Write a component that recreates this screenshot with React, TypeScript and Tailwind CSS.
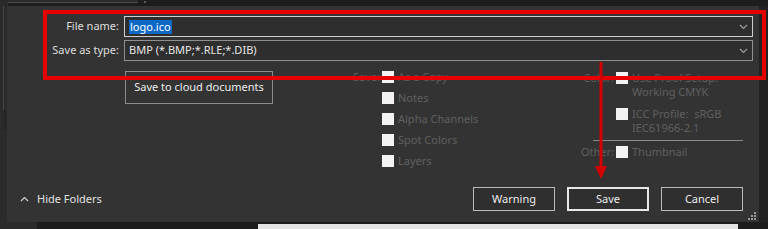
import React from "react";

const font = { fontFamily: '"Noto Sans", "Open Sans", sans-serif' };

function Chevron({ up = false }: { up?: boolean }): React.ReactElement {
  return (
    <svg width="9" height="6" viewBox="0 0 9 6" fill="none">
      <path
        d={up ? "M1 5L4.5 1.5L8 5" : "M1 1L4.5 4.5L8 1"}
        stroke="currentColor"
        strokeWidth="1.2"
      />
    </svg>
  );
}

function Box(): React.ReactElement {
  return <span className="block w-[12px] h-[12px] shrink-0 bg-[#f3f3f3]" />;
}

function CheckRow({ label }: { label: string }): React.ReactElement {
  return (
    <div className="flex items-center h-[12px] gap-[4px]">
      <Box />
      <span className="leading-[14px] text-[#606060]">{label}</span>
    </div>
  );
}

function DialogButton({
  label,
  primary,
}: {
  label: string;
  primary?: boolean;
}): React.ReactElement {
  return (
    <button
      type="button"
      className={`w-[82px] h-[24px] flex items-center justify-center bg-[#2f2f2f] text-[#ececec] ${
        primary ? "border-2 border-[#e8e8e8]" : "border border-[#b9b9b9]"
      }`}
    >
      {label}
    </button>
  );
}

export default function App(): React.ReactElement {
  return (
    <div
      className="w-[768px] h-[229px] bg-[#1d1d1d] flex flex-col overflow-hidden relative text-[11px]"
      style={font}
    >
      {/* strip above the dialog */}
      <div className="h-[6px] shrink-0 flex">
        <div className="w-[8px] bg-[#2a2a2a]" />
        <div className="w-[130px] h-[3px] bg-[#2c2c2c] border-b border-[#4a4a4a]" />
        <div className="w-[6px]" />
        <div className="w-[2px] h-[2px] mt-[1px] bg-[#5a5a5a]" />
      </div>

      <div className="flex flex-1 min-h-0">
        {/* left rail */}
        <div className="w-[7px] bg-[#2b2b2b] flex flex-col items-start pl-[3px]">
          <div className="w-[1px] h-[104px] bg-[#444444]" />
          <div className="w-[4px] h-[20px] bg-[#262626]" />
        </div>

        {/* dialog */}
        <div className="w-[752px] bg-[#333333] flex flex-col relative">
          <div className="flex flex-col gap-[3px] pt-[10px]">
            <div className="flex items-center">
              <span className="w-[117px] pr-[5px] text-right text-[#dedede]">File name:</span>
              <div className="flex-1 mr-[6px] h-[21px] border border-[#cfcfcf] bg-[#2e2e2e] flex items-center pl-[4px] pr-[4px]">
                <span className="bg-[#0e68c6] text-white leading-[14px] px-[1px]">logo.ico</span>
                <span className="ml-auto text-[#9a9a9a]">
                  <Chevron />
                </span>
              </div>
            </div>
            <div className="flex items-center">
              <span className="w-[117px] pr-[5px] text-right text-[#dedede]">Save as type:</span>
              <div className="flex-1 mr-[6px] h-[21px] border border-[#8f8f8f] bg-[#2e2e2e] flex items-center pl-[4px] pr-[4px] text-[#e6e6e6]">
                <span>BMP (*.BMP;*.RLE;*.DIB)</span>
                <span className="ml-auto text-[#9a9a9a]">
                  <Chevron />
                </span>
              </div>
            </div>
          </div>

          {/* options */}
          <div className="flex mt-[10px]">
            <div className="w-[118px]" />
            <button
              type="button"
              className="w-[148px] h-[33px] border border-[#8c8c8c] text-[#ececec] flex items-center justify-center"
            >
              Save to cloud documents
            </button>

            <div className="ml-[77px] w-[230px] flex">
              <span className="w-[30px] text-right leading-[12px] text-[#606060]">Save:</span>
              <div className="ml-[2px] flex flex-col gap-[9px]">
                <CheckRow label="As a Copy" />
                <CheckRow label="Notes" />
                <CheckRow label="Alpha Channels" />
                <CheckRow label="Spot Colors" />
                <CheckRow label="Layers" />
              </div>
            </div>

            <div className="flex flex-col text-[#606060]">
              <div className="flex items-start">
                <span className="w-[34px] text-right leading-[14px]">Color:</span>
                <span className="ml-[2px] mt-[1px]">
                  <Box />
                </span>
                <span className="ml-[4px] leading-[14px]">
                  Use Proof Setup:
                  <br />
                  Working CMYK
                </span>
              </div>
              <div className="flex items-start mt-[8px]">
                <span className="w-[34px]" />
                <span className="ml-[2px] mt-[1px]">
                  <Box />
                </span>
                <span className="ml-[4px] leading-[14px] whitespace-pre">
                  {"ICC Profile:  sRGB\nIEC61966-2.1"}
                </span>
              </div>
              <div className="ml-[13px] mt-[5px] w-[150px] h-px bg-[#8a8a8a]" />
              <div className="flex items-center h-[12px] mt-[5px]">
                <span className="w-[34px] text-right">Other:</span>
                <span className="ml-[2px]">
                  <Box />
                </span>
                <span className="ml-[4px]">Thumbnail</span>
              </div>
            </div>
          </div>

          {/* bottom bar */}
          <div className="mt-auto flex items-center pb-[11px] pl-[13px] pr-[16px]">
            <span className="text-[#cfcfcf] flex items-center gap-[8px]">
              <Chevron up />
              <span className="text-[#e0e0e0]">Hide Folders</span>
            </span>
            <div className="ml-auto flex gap-[12px]">
              <DialogButton label="Warning" />
              <DialogButton label="Save" primary />
              <DialogButton label="Cancel" />
            </div>
          </div>

          {/* resize grip */}
          <div className="absolute right-[3px] bottom-[2px] grid grid-cols-3 gap-[1px]">
            <span className="w-[2px] h-[2px]" />
            <span className="w-[2px] h-[2px]" />
            <span className="w-[2px] h-[2px] bg-[#9a9a9a]" />
            <span className="w-[2px] h-[2px]" />
            <span className="w-[2px] h-[2px] bg-[#9a9a9a]" />
            <span className="w-[2px] h-[2px] bg-[#9a9a9a]" />
            <span className="w-[2px] h-[2px] bg-[#9a9a9a]" />
            <span className="w-[2px] h-[2px] bg-[#9a9a9a]" />
            <span className="w-[2px] h-[2px] bg-[#9a9a9a]" />
          </div>
        </div>

        {/* right rail */}
        <div className="flex-1 bg-[#222222]" />
      </div>

      {/* strip below the dialog */}
      <div className="h-[7px] shrink-0 flex">
        <div className="w-[37px] bg-[#2b2b2b]" />
        <div className="w-[221px]" />
        <div className="w-[480px] mt-[2px] bg-[#e4e4e4]" />
      </div>

      {/* red annotation */}
      <div className="absolute left-[43px] top-[10px] w-[723px] h-[70px] border-4 border-[#e60000] pointer-events-none" />
      <svg
        className="absolute left-[594px] top-[62px] pointer-events-none"
        width="14"
        height="120"
        viewBox="0 0 14 120"
      >
        <line x1="7" y1="0" x2="7" y2="106" stroke="#d40000" strokeWidth="3" />
        <path d="M1 104L7 117L13 104Z" fill="#d40000" />
      </svg>
    </div>
  );
}
